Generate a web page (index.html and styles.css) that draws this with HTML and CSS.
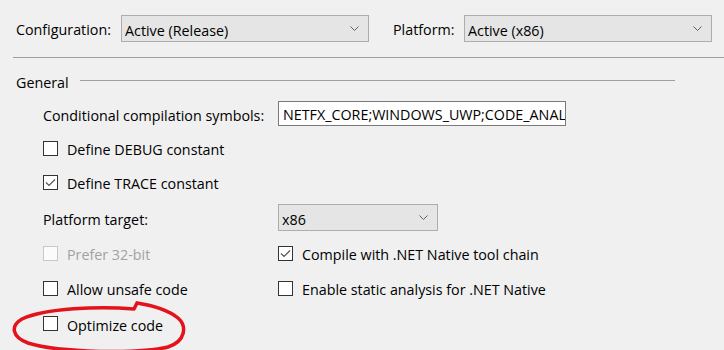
FILE: index.html
```html
<!DOCTYPE html>
<html lang="en">
<head>
  <meta charset="UTF-8">
  <title>Build Properties</title>
  <link rel="stylesheet" href="styles.css">
</head>
<body>

  <div class="topbar">
    <label class="top-label">Configuration:</label>
    <div class="combo wide">
      <span class="txt">Active (Release)</span>
      <svg class="chevron" width="9" height="5" viewBox="0 0 9 5"><polyline points="0.5,0.5 4.5,4.5 8.5,0.5"/></svg>
    </div>
    <label class="top-label platform">Platform:</label>
    <div class="combo wide">
      <span class="txt">Active (x86)</span>
      <svg class="chevron" width="9" height="5" viewBox="0 0 9 5"><polyline points="0.5,0.5 4.5,4.5 8.5,0.5"/></svg>
    </div>
  </div>

  <div class="group-head">
    <span class="group-title">General</span>
    <div class="rule"></div>
  </div>

  <div class="options">
    <label class="txt">Conditional compilation symbols:</label>
    <div class="textbox">NETFX_CORE;WINDOWS_UWP;CODE_ANAL</div>

    <div class="check"><span class="box"></span><span class="txt">Define DEBUG constant</span></div>
    <div></div>

    <div class="check"><span class="box"><svg width="13" height="13" viewBox="0 0 13 13"><polyline points="2,6.5 5,9.5 11,3.5"/></svg></span><span class="txt">Define TRACE constant</span></div>
    <div></div>

    <label class="txt">Platform target:</label>
    <div class="combo small">
      <span class="txt">x86</span>
      <svg class="chevron" width="9" height="5" viewBox="0 0 9 5"><polyline points="0.5,0.5 4.5,4.5 8.5,0.5"/></svg>
    </div>

    <div class="check disabled"><span class="box"></span><span class="txt">Prefer 32-bit</span></div>
    <div class="check"><span class="box"><svg width="13" height="13" viewBox="0 0 13 13"><polyline points="2,6.5 5,9.5 11,3.5"/></svg></span><span class="txt">Compile with .NET Native tool chain</span></div>

    <div class="check"><span class="box"></span><span class="txt">Allow unsafe code</span></div>
    <div class="check"><span class="box"></span><span class="txt">Enable static analysis for .NET Native</span></div>

    <div class="check"><span class="box"></span><span class="txt">Optimize code</span></div>
    <div></div>
  </div>

  <!-- hand drawn marker around "Optimize code" -->
  <svg class="scribble" width="200" height="60" viewBox="0 295 200 60">
    <path d="M137 303 L134 309 C100 306 45 308 22 319 C10 326 12 337 28 343 C60 353 140 354 168 347 C186 341 187 326 178 318 C168 310 150 305 137 303"/>
  </svg>

</body>
</html>
```

FILE: styles.css
```css
body {
  margin: 0;
  background-color: #f0f0f0;
  font-family: "Open Sans", "Noto Sans", sans-serif;
  font-size: 14.3px;
  color: #000;
  width: 724px;
  height: 350px;
  overflow: hidden;
  position: relative;
}
.txt {
  padding-top: 3px;
}
.topbar {
  display: flex;
  align-items: center;
  margin-left: 13px;
  padding: 15px 0 15px 3px;
  border-bottom: 1px solid #a0a0a0;
}
.top-label {
  width: 105px;
  padding-top: 2px;
}
.top-label.platform {
  width: 71px;
  margin-left: 24px;
}
.combo {
  display: flex;
  align-items: center;
  justify-content: space-between;
  box-sizing: border-box;
  height: 27px;
  padding: 0 9px 0 3px;
  background-color: #e5e5e5;
  border: 1px solid #adadad;
}
.combo.wide {
  width: 248px;
}
.combo.small {
  width: 160px;
}
.chevron polyline {
  fill: none;
  stroke: #606060;
  stroke-width: 1;
}
.group-head {
  display: flex;
  align-items: center;
  height: 22px;
  margin-top: 12px;
  padding-left: 16px;
}
.group-title {
  width: 64px;
  padding-top: 2px;
}
.rule {
  width: 595px;
  height: 1px;
  margin-top: -2px;
  background-color: #a0a0a0;
}
.options {
  display: grid;
  grid-template-columns: 235px 300px;
  grid-template-rows: 35px 34px 34px 37px 34px 36px 35px;
  align-items: center;
  margin-top: 4px;
  padding-left: 43px;
}
.textbox {
  box-sizing: border-box;
  width: 288px;
  height: 25px;
  line-height: 23px;
  padding: 1px 0 0 4px;
  background-color: #fff;
  border: 1px solid #7a7a7a;
  white-space: nowrap;
  overflow: hidden;
}
.check {
  display: flex;
  align-items: center;
}
.box {
  box-sizing: border-box;
  flex: none;
  width: 15px;
  height: 15px;
  margin-right: 9px;
  background-color: #fff;
  border: 1px solid #333;
}
.box svg {
  display: block;
}
.box polyline {
  fill: none;
  stroke: #555;
  stroke-width: 1.2;
}
.check.disabled {
  color: #a2a2a2;
}
.check.disabled .box {
  border-color: #c8c8c8;
  background-color: #fbfbfb;
}
.scribble {
  position: absolute;
  left: 0;
  top: 295px;
}
.scribble path {
  fill: none;
  stroke: #e3121b;
  stroke-width: 3.5;
  stroke-linecap: round;
  stroke-linejoin: round;
}
```
